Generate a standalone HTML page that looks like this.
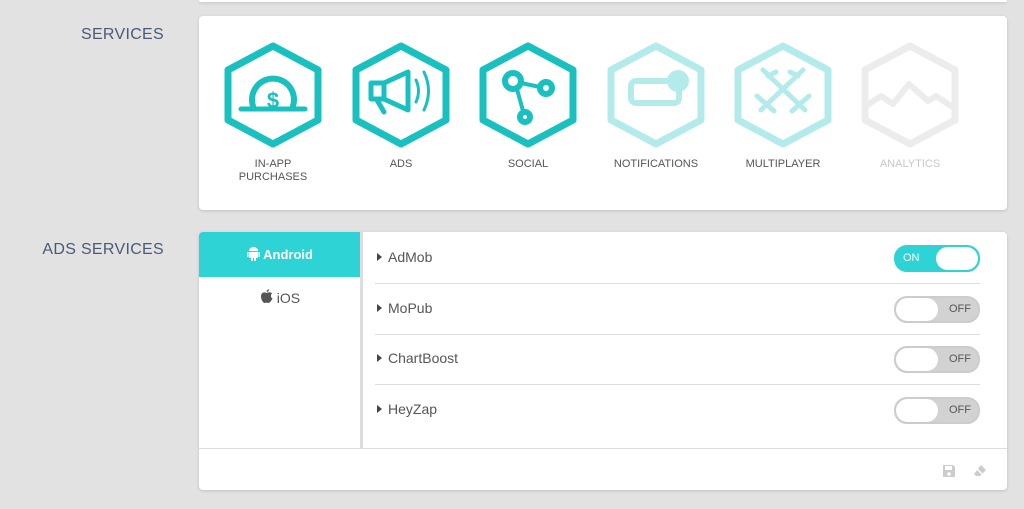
<!DOCTYPE html>
<html><head><style>
body{margin:0;width:1024px;height:509px;background:#e2e2e2;font-family:"Liberation Sans",sans-serif;position:relative;overflow:hidden}
.card{position:absolute;left:199px;width:808px;background:#fff;border-radius:4px;box-shadow:0 1px 3px rgba(0,0,0,.15)}
.h{position:absolute;left:0;width:164px;text-align:right;color:#4a5a75;font-size:16px;letter-spacing:.3px}
.lbl{position:absolute;width:120px;text-align:center;font-size:11px;color:#555;line-height:13px}
.row{position:absolute;left:375px;width:605px;height:1px;background:#ddd}
.name{position:absolute;left:377px;font-size:14px;color:#555}
.name:before{content:"";display:inline-block;border-left:5px solid #444;border-top:4px solid transparent;border-bottom:4px solid transparent;margin-right:6px;vertical-align:1px}
.tg{position:absolute;left:894px;width:82px;height:23px;border-radius:13px;border:2px solid #ccc;background:#d2d2d2;font-size:11px;color:#555}
.tg span{position:absolute;right:7px;top:5px}
.tg i{position:absolute;left:0;top:0;width:42px;height:23px;border-radius:12px;background:#fff}
</style></head><body>
<div class="card" style="top:0;height:2px;border-radius:0 0 4px 4px"></div>
<div class="h" style="top:26px">SERVICES</div>
<div class="card" style="top:16px;height:194px"></div>
<svg style="position:absolute;left:0;top:0" width="1024" height="200">
<defs><path id="hx" d="M0,-49 L45,-25 L45,25 L0,49 L-45,25 L-45,-25Z" fill="none" stroke-width="7" stroke-linejoin="round"/></defs>
<g stroke="#18c0bf" fill="none" stroke-width="6" stroke-linecap="round">
<use href="#hx" x="273" y="95"/>
<path d="M241,109 L305,109" stroke-width="5"/><path d="M253,106 A21,21 0 1 1 293,106"/>
<text x="273" y="108" font-size="22" font-weight="bold" fill="#18c0bf" stroke="none" text-anchor="middle">$</text>
<use href="#hx" x="401" y="95"/>
<path d="M371,83 h13 v16 h-13z M384,83 L408,72 L408,110 L384,99 M377,100 l7,12" stroke-width="5" stroke-linejoin="round"/>
<path d="M416,80 q5,11 0,22 M424,72 q9,19 0,38" stroke-width="3"/>
<use href="#hx" x="528" y="95"/>
<circle cx="513" cy="81" r="8"/><circle cx="546" cy="88" r="6"/><circle cx="525" cy="117" r="5"/><path d="M521,83 L540,87 M517,89 L523,111" stroke-width="4"/>
</g>
<g stroke="#b3ebeb" fill="none" stroke-width="6" stroke-linecap="round">
<use href="#hx" x="656" y="95"/>
<rect x="631" y="81" width="48" height="22" rx="5"/><circle cx="678" cy="81" r="8" fill="#b3ebeb"/>
<use href="#hx" x="783" y="95"/>
<path d="M763,70 L805,110 M803,70 L761,110 M757,96 l17,15 M809,96 l-17,15 M768,76 l8,-4 M798,76 l-8,-4" stroke-width="5"/>
</g>
<g stroke="#ececec" fill="none" stroke-width="6">
<use href="#hx" x="910" y="95"/>
<path d="M866,106 L881,96 L893,104 L909,84 L928,101 L936,96 L954,108" stroke-linejoin="round"/>
</g>
</svg>
<div class="lbl" style="left:213px;top:158px">IN-APP<br>PURCHASES</div>
<div class="lbl" style="left:341px;top:158px">ADS</div>
<div class="lbl" style="left:468px;top:158px">SOCIAL</div>
<div class="lbl" style="left:596px;top:158px">NOTIFICATIONS</div>
<div class="lbl" style="left:723px;top:158px">MULTIPLAYER</div>
<div class="lbl" style="left:850px;top:158px;color:#c8c8c8">ANALYTICS</div>

<div class="h" style="top:241px">ADS SERVICES</div>
<div class="card" style="top:232px;height:258px"></div>
<div style="position:absolute;left:199px;top:232px;width:162px;height:45px;background:#2ed3d6;border-radius:4px 0 0 0;color:#fff;font-size:13px;font-weight:bold;text-align:center;line-height:45px"><svg width="13" height="15" viewBox="0 0 13 15" style="vertical-align:-2px"><path d="M2,5 A4.5,4 0 0 1 11,5Z M2,6 h9 v6 h-9z M4,12 h2 v3 h-2z M7,12 h2 v3 h-2z M0,6 h1.5 v5 h-1.5z M11.5,6 h1.5 v5 h-1.5z" fill="#fff"/></svg> Android</div>
<div style="position:absolute;left:199px;top:289px;width:162px;text-align:center;color:#555;font-size:14px"><svg width="13" height="15" viewBox="0 0 13 15" style="vertical-align:-1px"><path d="M6.5,4 C4,2.5 1,3.5 1,7.5 C1,11 3.5,14.5 5,14 C6,13.5 7,13.5 8,14 C9.5,14.5 12,11 12.5,9.5 C10.5,8.5 10.5,5.5 12,4.5 C10.5,2.5 8,3.5 6.5,4Z M6.5,3 C6.5,1.5 7.5,0.5 9,0.3 C9,2 8,3 6.5,3Z" fill="#555"/></svg> iOS</div>
<div style="position:absolute;left:360px;top:232px;width:3px;height:216px;background:#ddd"></div>
<div style="position:absolute;left:199px;top:448px;width:808px;height:1px;background:#ddd"></div>
<div class="name" style="top:249px">AdMob</div>
<div class="row" style="top:283px"></div>
<div class="name" style="top:300px">MoPub</div>
<div class="row" style="top:334px"></div>
<div class="name" style="top:350px">ChartBoost</div>
<div class="row" style="top:384px"></div>
<div class="name" style="top:401px">HeyZap</div>
<div class="tg" style="top:245px;background:#2ed3d6;border-color:#2ed3d6;color:#fff"><span style="left:7px;right:auto">ON</span><i style="left:40px"></i></div>
<div class="tg" style="top:296px"><span>OFF</span><i></i></div>
<div class="tg" style="top:346px"><span>OFF</span><i></i></div>
<div class="tg" style="top:397px"><span>OFF</span><i></i></div>
<svg style="position:absolute;left:942px;top:464px" width="14" height="14" viewBox="0 0 14 14"><path d="M1,1 h10 l2,2 v10 h-12z" fill="#ccc"/><rect x="3" y="2" width="7" height="4" fill="#fff"/><circle cx="7" cy="10" r="1.8" fill="#fff"/></svg>
<svg style="position:absolute;left:972px;top:463px" width="16" height="16" viewBox="0 0 16 16"><path d="M9,2 L14,7 L8,13 L4,13 L2,11 Z" fill="#ccc"/><path d="M5,6 L10,11" stroke="#fff" stroke-width="1.5"/></svg>
</body></html>
